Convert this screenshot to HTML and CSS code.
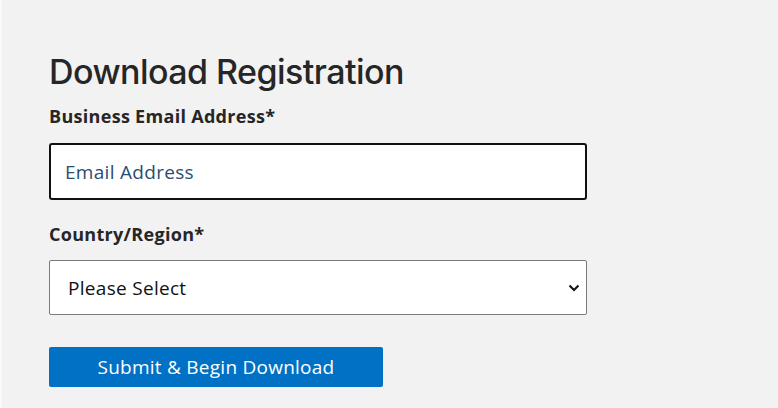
FILE: index.html
```html
<!DOCTYPE html>
<html lang="en">
<head>
<meta charset="utf-8">
<title>Download Registration</title>
<link rel="stylesheet" href="styles.css">
</head>
<body>
<main class="panel">
  <h1 class="title">Download Registration</h1>
  <form class="form">
    <div class="field">
      <label class="label" for="email">Business Email Address*</label>
      <input class="input" id="email" type="email" placeholder="Email Address">
    </div>
    <div class="field">
      <label class="label" for="country">Country/Region*</label>
      <div class="select-wrap">
        <select class="select" id="country">
          <option>Please Select</option>
        </select>
        <svg class="chevron" width="12" height="8" viewBox="0 0 12 8"><path d="M1.5 1.5 L6 6 L10.5 1.5" fill="none" stroke="#111" stroke-width="2"/></svg>
      </div>
    </div>
    <button class="submit" type="button">Submit &amp; Begin Download</button>
  </form>
</main>
</body>
</html>
```
FILE: styles.css
```css
html, body {
  margin: 0;
  padding: 0;
  background: #fafafa;
}
body {
  padding-left: 2px;
  height: 408px;
  box-sizing: border-box;
  overflow: hidden;
}
.panel {
  background: #f2f2f2;
  height: 100%;
  padding: 50px 0 0 47px;
  box-sizing: border-box;
  color: #262626;
  font-family: "Open Sans", "Noto Sans", sans-serif;
}
.title {
  margin: 0;
  font-family: "Inter", sans-serif;
  font-weight: 500;
  font-size: 34px;
  letter-spacing: -0.55px;
  line-height: 44px;
  color: #262626;
}
.form {
  display: flex;
  flex-direction: column;
  width: 538px;
}
.field {
  display: flex;
  flex-direction: column;
}
.label {
  font-weight: 700;
  font-size: 18px;
  letter-spacing: 0.3px;
  line-height: 24px;
  margin-top: 10px;
  margin-bottom: 15px;
}
.field + .field .label {
  margin-top: 22px;
  margin-bottom: 14px;
}
.input {
  height: 57px;
  box-sizing: border-box;
  border: 2px solid #111;
  border-radius: 3px;
  background: #fff;
  padding: 0 14px;
  font-family: "Open Sans", sans-serif;
  font-size: 19px;
  letter-spacing: 0.3px;
  outline: none;
}
.input::placeholder {
  color: #2b4d73;
  opacity: 1;
}
.select-wrap {
  position: relative;
}
.select {
  width: 100%;
  height: 55px;
  box-sizing: border-box;
  appearance: none;
  -webkit-appearance: none;
  border: 1px solid #7a7a7a;
  border-radius: 2px;
  background: #fff;
  padding: 0 18px;
  font-family: "Open Sans", sans-serif;
  font-size: 19px;
  letter-spacing: 0.3px;
  color: #111;
}
.chevron {
  position: absolute;
  right: 7px;
  top: 24px;
}
.submit {
  margin-top: 32px;
  width: 334px;
  height: 40px;
  border: none;
  border-radius: 2px;
  background: #0071c5;
  color: #fff;
  font-family: "Open Sans", sans-serif;
  font-size: 19px;
  letter-spacing: 0.25px;
  padding: 0;
}
```
